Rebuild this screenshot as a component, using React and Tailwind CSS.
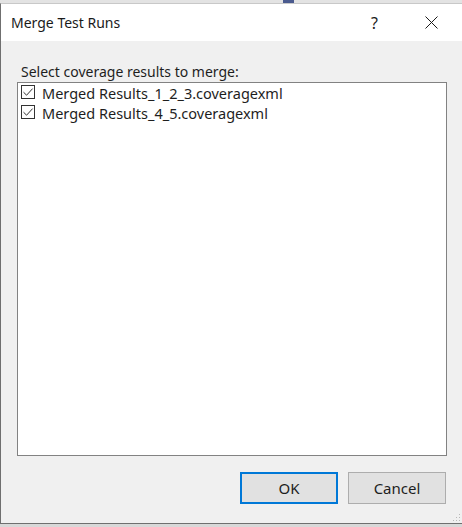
import React from "react";

const font = { fontFamily: '"Noto Sans", "Segoe UI", sans-serif' };

function CheckBox() {
  return (
    <div className="w-[14px] h-[14px] mt-[2px] self-start border border-[#333333] bg-white flex items-center justify-center shrink-0">
      <svg width="12" height="12" viewBox="0 0 12 12" fill="none">
        <path d="M1.5 6.2 L4.6 9.2 L10.6 2.6" stroke="#333333" strokeWidth="1" />
      </svg>
    </div>
  );
}

function Item({ label }) {
  return (
    <div className="h-[20px] flex items-center gap-[7px] pl-[2px]">
      <CheckBox />
      <span className="text-[14.5px] text-[#1e1e1e] leading-none pt-[1px]">{label}</span>
    </div>
  );
}

export default function App() {
  return (
    <div className="w-[462px] h-[527px] bg-[#d4d4d4] flex flex-col overflow-hidden relative" style={font}>
      {/* strip of the window behind */}
      <div className="h-[3px] flex bg-[#e3e3e3]">
        <div className="w-[283px]" />
        <div className="w-[11px] bg-[#4a5a8e]" />
      </div>

      <div className="flex-1 flex flex-col border-l border-t border-b border-[#6f6f6f] border-t-[#c8c8c8]">
        {/* title bar */}
        <div className="h-[37px] bg-white flex items-center pl-[10px] relative">
          <span className="text-[14px] text-[#1a1a1a] flex-1">Merge Test Runs</span>
          <span className="text-[16px] text-[#1a1a1a] w-[10px] mr-[44px]">?</span>
          <svg width="13" height="13" viewBox="0 0 13 13" className="mr-[24px]">
            <path d="M0.5 0.5 L12.5 12.5 M12.5 0.5 L0.5 12.5" stroke="#1a1a1a" strokeWidth="1" />
          </svg>
        </div>

        {/* dialog body */}
        <div className="flex-1 bg-[#f0f0f0] flex flex-col pl-[16px] pr-[15px] pt-[21px] relative">
          <div className="text-[14px] text-[#1e1e1e] leading-[20px] pl-[4px] h-[20px]">
            Select coverage results to merge:
          </div>
          <div className="h-[374px] bg-white border border-[#828282] pl-[1px]">
            <Item label="Merged Results_1_2_3.coveragexml" />
            <Item label="Merged Results_4_5.coveragexml" />
          </div>

          <div className="flex justify-end gap-[10px] mt-[16px] pr-[1px]">
            <button className="w-[98px] h-[32px] bg-[#e1e1e1] border-2 border-[#0078d7] text-[15px] text-[#1e1e1e]">
              OK
            </button>
            <button className="w-[98px] h-[32px] bg-[#e1e1e1] border border-[#adadad] text-[15px] text-[#1e1e1e]">
              Cancel
            </button>
          </div>

          {/* resize grip */}
          <svg width="8" height="8" viewBox="0 0 8 8" className="absolute right-[1px] bottom-[1px]">
            <rect x="6" y="0" width="1" height="1" fill="#b8b8b8" />
            <rect x="3" y="3" width="1" height="1" fill="#b8b8b8" />
            <rect x="6" y="3" width="1" height="1" fill="#b8b8b8" />
            <rect x="0" y="6" width="1" height="1" fill="#b8b8b8" />
            <rect x="3" y="6" width="1" height="1" fill="#b8b8b8" />
            <rect x="6" y="6" width="1" height="1" fill="#b8b8b8" />
          </svg>
        </div>
      </div>
      <div className="h-[3px] bg-[#d8d8d8]" />
    </div>
  );
}
